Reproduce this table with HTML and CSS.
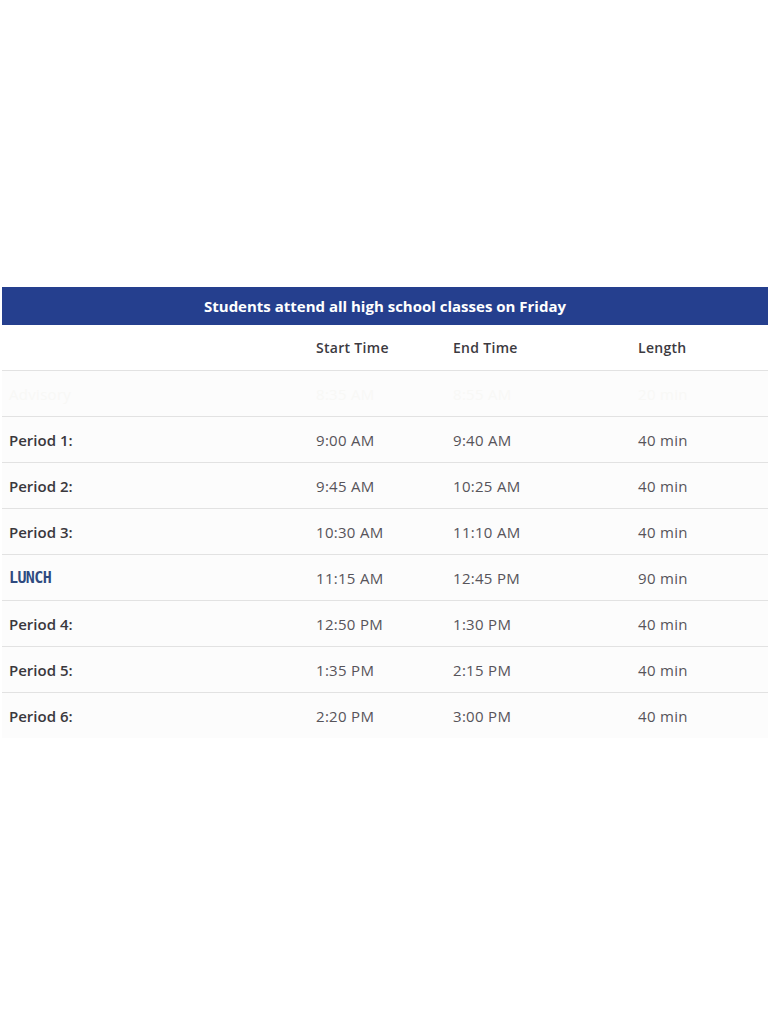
FILE: index.html
```html
<!DOCTYPE html>
<html lang="en">
<head>
<meta charset="utf-8">
<title>Friday Schedule</title>
<link rel="stylesheet" href="styles.css">
</head>
<body>
<main class="page">
  <table class="schedule">
    <colgroup>
      <col class="c-label">
      <col class="c-start">
      <col class="c-end">
      <col class="c-len">
    </colgroup>
    <thead>
      <tr class="title-row"><th colspan="4">Students attend all high school classes on Friday</th></tr>
      <tr class="head-row"><th></th><th>Start Time</th><th>End Time</th><th>Length</th></tr>
    </thead>
    <tbody>
      <tr class="ghost"><td>Advisory</td><td>8:35 AM</td><td>8:55 AM</td><td>20 min</td></tr>
      <tr><td class="label">Period 1:</td><td>9:00 AM</td><td>9:40 AM</td><td>40 min</td></tr>
      <tr><td class="label">Period 2:</td><td>9:45 AM</td><td>10:25 AM</td><td>40 min</td></tr>
      <tr><td class="label">Period 3:</td><td>10:30 AM</td><td>11:10 AM</td><td>40 min</td></tr>
      <tr><td class="label lunch">LUNCH</td><td>11:15 AM</td><td>12:45 PM</td><td>90 min</td></tr>
      <tr><td class="label">Period 4:</td><td>12:50 PM</td><td>1:30 PM</td><td>40 min</td></tr>
      <tr><td class="label">Period 5:</td><td>1:35 PM</td><td>2:15 PM</td><td>40 min</td></tr>
      <tr class="last"><td class="label">Period 6:</td><td>2:20 PM</td><td>3:00 PM</td><td>40 min</td></tr>
    </tbody>
  </table>
</main>
</body>
</html>
```

FILE: styles.css
```css
html, body {
  margin: 0;
  padding: 0;
  background: #ffffff;
}
body {
  font-family: "Open Sans", "Liberation Sans", sans-serif;
  color: #4a4a4a;
}
.page {
  padding: 287px 0 0 2px;
}
.schedule {
  width: 766px;
  border-collapse: collapse;
  table-layout: fixed;
}
.c-label { width: 307px; }
.c-start { width: 137px; }
.c-end { width: 185px; }
.c-len { width: auto; }

.title-row th {
  background: #253f8e;
  color: #ffffff;
  font-weight: 700;
  font-size: 15px;
  height: 38px;
  padding: 0;
  text-align: center;
}
.head-row th {
  background: #ffffff;
  color: #3c3a3f;
  font-weight: 600;
  font-size: 14px;
  letter-spacing: 0.3px;
  text-align: left;
  height: 45px;
  padding: 0 0 0 7px;
  border-bottom: 1px solid #e2e2e2;
}
tbody td {
  background: #fcfcfc;
  font-size: 15px;
  line-height: 20px;
  letter-spacing: 0.3px;
  color: #57545a;
  height: 45px;
  padding: 0 0 0 7px;
  border-bottom: 1px solid #e2e2e2;
}
tbody tr.last td {
  border-bottom: none;
}
.label {
  font-weight: 600;
  letter-spacing: 0;
  color: #3a383c;
}
.lunch {
  color: #2f4a80;
  font-family: "DejaVu Sans Mono", "Liberation Mono", monospace;
  font-weight: 700;
  letter-spacing: -0.6px;
}
.ghost td {
  color: #f8f8f6;
}
```
